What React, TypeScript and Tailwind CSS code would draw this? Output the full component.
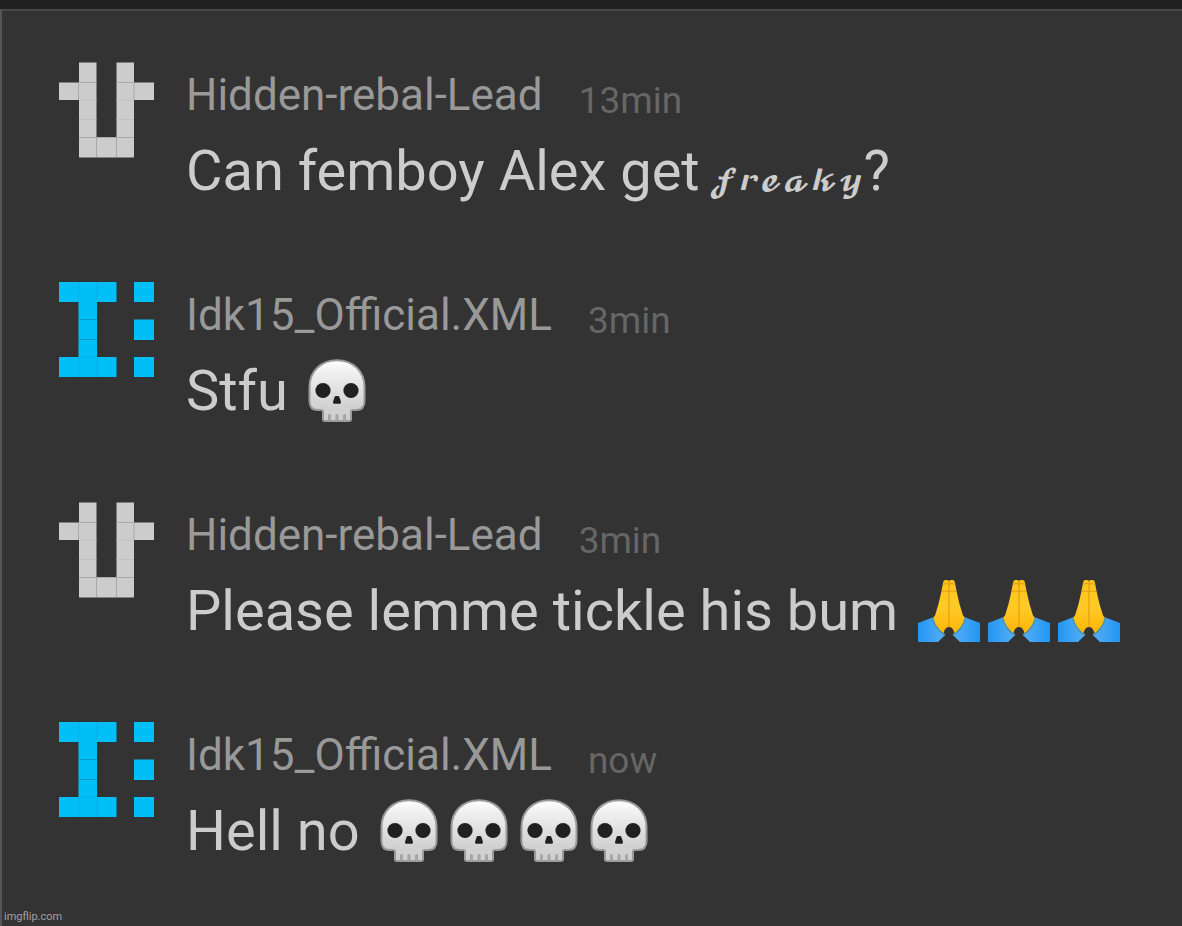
type Emoji = "skull" | "pray"

type Message = {
  id: number
  name: string
  time: string
  avatar: "rebal" | "idk"
  text: string
  script?: string
  after?: string
  emojis?: Emoji[]
}

const messages: Message[] = [
  {
    id: 1,
    name: "Hidden-rebal-Lead",
    time: "13min",
    avatar: "rebal",
    text: "Can femboy Alex get",
    script: " 𝓯𝓻𝓮𝓪𝓴𝔂",
    after: "?",
  },
  {
    id: 2,
    name: "Idk15_Official.XML",
    time: "3min",
    avatar: "idk",
    text: "Stfu ",
    emojis: ["skull"],
  },
  {
    id: 3,
    name: "Hidden-rebal-Lead",
    time: "3min",
    avatar: "rebal",
    text: "Please lemme tickle his bum ",
    emojis: ["pray", "pray", "pray"],
  },
  {
    id: 4,
    name: "Idk15_Official.XML",
    time: "now",
    avatar: "idk",
    text: "Hell no ",
    emojis: ["skull", "skull", "skull", "skull"],
  },
]

function RebalAvatar() {
  return (
    <svg viewBox="0 0 96 96" className="size-24 shrink-0" aria-hidden="true">
      <path
        d="M20 0.5H37.5V75.5H57.5V0.5H75V20.5H95V38H75V95.5H20V38H0V20.5H20Z"
        fill="#cccccc"
      />
      <path
        d="M20 20.5H37.5M57.5 20.5H75M20 75.5H75M19.5 20.5V38M75 20.5V38M37.5 75.5V95M57.5 75.5V95"
        stroke="#a9a9a9"
        strokeWidth="1"
      />
      <path d="M20 38H37.5M57.5 38H75M20 57.5H37.5M57.5 57.5H75" stroke="#c0c0c0" strokeWidth="1" />
    </svg>
  )
}

function IdkAvatar() {
  return (
    <svg viewBox="0 0 96 96" className="size-24 shrink-0" aria-hidden="true">
      <path
        d="M0 0H57.5V20H38V75H57.5V95H0V75H19.5V20H0ZM75 0H95V20H75ZM75 37.5H95V58H75ZM75 75H95V95H75Z"
        fill="#00bff6"
      />
      <path d="M19.5 37.5H38M19.5 57.5H38" stroke="#0799c5" strokeWidth="1" />
      <path
        d="M19.5 0V20M38 0V20M19.5 75V95M38 75V95M19.5 75H38"
        stroke="#06aede"
        strokeWidth="1"
      />
    </svg>
  )
}

function Skull() {
  return (
    <svg viewBox="0 0 70 66" className="h-[66px] w-[70px] shrink-0" role="img" aria-label="skull">
      <defs>
        <linearGradient id="bone" x1="0" y1="0" x2="0" y2="1">
          <stop offset="0" stopColor="#ffffff" />
          <stop offset="0.2" stopColor="#f0f0f0" />
          <stop offset="0.75" stopColor="#d2d2d2" />
          <stop offset="1" stopColor="#cecece" />
        </linearGradient>
      </defs>
      <path
        d="M35 2.2C19 2.2 7.5 13.5 7.5 29V43C7.5 49 11 52 16 52H19.5C20.6 52 21 52.5 21 53.5V61C21 62.4 21.7 63 23 63H47C48.3 63 49 62.4 49 61V53.5C49 52.5 49.4 52 50.5 52H54C59 52 62.5 49 62.5 43V29C62.5 13.5 51 2.2 35 2.2Z"
        fill="url(#bone)"
        stroke="#9b9b9b"
        strokeWidth="2"
      />
      <circle cx="21" cy="32.5" r="7.6" fill="#202020" />
      <circle cx="49" cy="32.5" r="7.6" fill="#202020" />
      <path
        d="M34 38H36Q37 38 37.4 39L39 44Q39.200 45.700 37.800 45.700H32.200Q30.800 45.700 31 44L32.600 39Q33 38 34 38Z"
        fill="#202020"
      />
      <path
        d="M27.500 62V57.500M35 62V57.500M42.500 62V57.500"
        stroke="#a5a5a5"
        strokeWidth="3"
        strokeLinecap="round"
      />
    </svg>
  )
}

function Pray() {
  return (
    <svg viewBox="-2 0 70 66" className="h-[66px] w-[70px] shrink-0" role="img" aria-label="folded hands">
      <defs>
        <linearGradient id="skin" x1="0" y1="0" x2="0" y2="1">
          <stop offset="0" stopColor="#fcc21b" />
          <stop offset="0.5" stopColor="#ffca28" />
          <stop offset="1" stopColor="#ffb300" />
        </linearGradient>
        <linearGradient id="cuffLeft" x1="0" y1="0" x2="1" y2="0">
          <stop offset="0" stopColor="#2196f3" />
          <stop offset="1" stopColor="#58aef5" />
        </linearGradient>
        <linearGradient id="cuffRight" x1="1" y1="0" x2="0" y2="0">
          <stop offset="0" stopColor="#2196f3" />
          <stop offset="1" stopColor="#58aef5" />
        </linearGradient>
      </defs>
      <path
        d="M31 2H33Q34.500 2 35 3.200Q35.500 2 37 2H39Q40.500 2 41 5L42.500 13L45.500 26L49 37.500Q50.500 40 53 41L50 52L40.500 57.500C40.500 52 38 49 35 49C32 49 29.500 52 29.500 57.500L20 52L17 41Q19.500 40 21 37.500L24.500 26L27.500 13L29 5Q29.500 2 31 2Z"
        fill="url(#skin)"
      />
      <path
        d="M35 3V49M29.500 6.500Q32.500 4.500 35 6.500Q37.500 4.500 40.500 6.500M28 13.500Q31 12.500 35 13.500Q39 12.500 42 13.500"
        fill="none"
        stroke="#e2a010"
        strokeWidth="1.200"
      />
      <path d="M4 45L18.500 39.500C20 46 24 53 31 57L24 64H4Z" fill="url(#cuffLeft)" />
      <path d="M66 45L51.500 39.500C50 46 46 53 39 57L46 64H66Z" fill="url(#cuffRight)" />
      <path
        d="M18.500 39.500C20 46 24 53 31 57M51.500 39.500C50 46 46 53 39 57"
        fill="none"
        stroke="#4b93b0"
        strokeWidth="1.500"
      />
    </svg>
  )
}

export default function App() {
  return (
    <div className="relative flex min-h-screen flex-col bg-[#333333] font-['Roboto',sans-serif]">
      <div className="h-[9px] shrink-0 bg-[#202020]" />

      <main className="flex flex-1 flex-col gap-[78px] border-t-2 border-l-2 border-t-[#484848] border-l-[#555555] pt-[51px] pl-[57px]">
        {messages.map((message) => (
          <article key={message.id} className="flex gap-[31px]">
            {message.avatar === "rebal" ? <RebalAvatar /> : <IdkAvatar />}
            <div className="min-w-0 pt-[7px]">
              <header className="flex items-baseline gap-9">
                <h2 className="text-[44px] leading-[52px] text-[#999999]">{message.name}</h2>
                <time className="relative top-[3px] text-[37px] leading-[44px] text-[#666666]">
                  {message.time}
                </time>
              </header>
              <p className="mt-[17px] flex h-[66px] items-center text-[56px] leading-[66px] whitespace-pre text-[#cccccc]">
                <span>
                  {message.text}
                  {message.script && (
                    <span className="font-['DejaVu_Math_TeX_Gyre','DejaVu_Serif',serif] text-[28px] leading-none">
                      {message.script}
                    </span>
                  )}
                  {message.after}
                </span>
                {message.emojis?.map((emoji, i) => (emoji === "skull" ? <Skull key={i} /> : <Pray key={i} />))}
              </p>
            </div>
          </article>
        ))}
      </main>

      <footer className="absolute bottom-0 left-1 text-[11px] leading-[18px] text-[#a0a0a0]">imgflip.com</footer>
    </div>
  )
}
